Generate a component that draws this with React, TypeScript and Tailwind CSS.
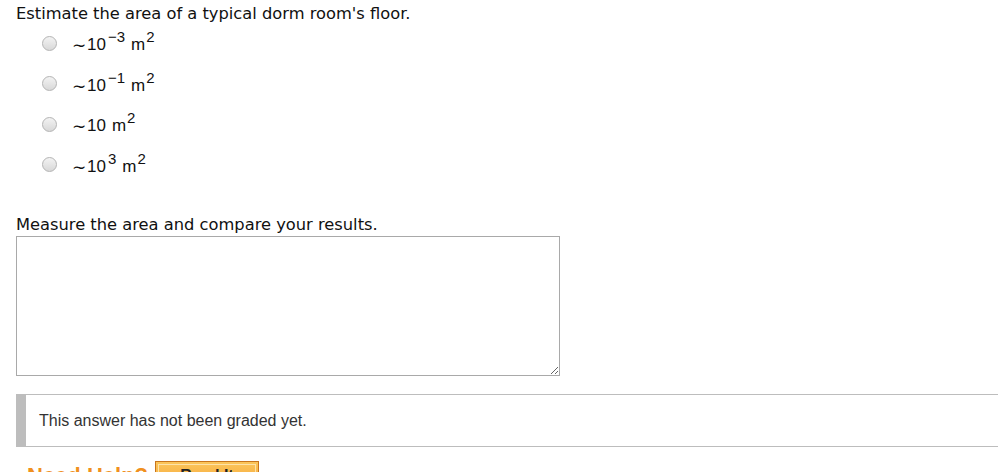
import React from "react";

const options: { base: string; exp?: string }[] = [
  { base: "10", exp: "−3" },
  { base: "10", exp: "−1" },
  { base: "10" },
  { base: "10", exp: "3" },
];

function Radio() {
  return (
    <span className="inline-block w-[15px] h-[15px] rounded-full border border-[#b4b4b4] bg-gradient-to-b from-[#f3f3f3] to-[#d8d8d8] shrink-0" />
  );
}

export default function App() {
  return (
    <div className="w-[998px] h-[472px] overflow-hidden bg-white relative">
      <div className="pl-4 pt-[4px]">
        <div
          className="text-[16.3px] leading-[20px] text-[#111]"
          style={{ fontFamily: '"DejaVu Sans", Verdana, sans-serif' }}
        >
          Estimate the area of a typical dorm room's floor.
        </div>
        <div className="flex flex-col mt-[-1px]">
          {options.map((o, i) => (
            <label key={i} className="flex items-center h-[40.5px] pl-[26px]">
              <Radio />
              <span
                className="ml-[15px] text-[17px] text-[#111] leading-none pt-[3px] whitespace-nowrap"
                style={{ fontFamily: '"Liberation Sans", Arial, sans-serif' }}
              >
                <span className="text-[17px] relative top-[1px] mr-[1px]">∼</span>
                {o.base}
                {o.exp && (
                  <sup className="text-[15px] relative top-[-8px] ml-[2px]">{o.exp}</sup>
                )}
                <span className="ml-[6px]">m</span>
                <sup className="text-[15px] relative top-[-8px] ml-[1px]">2</sup>
              </span>
            </label>
          ))}
        </div>
        <div
          className="mt-[30px] text-[16.3px] leading-[20px] text-[#111]"
          style={{ fontFamily: '"DejaVu Sans", Verdana, sans-serif' }}
        >
          Measure the area and compare your results.
        </div>
        <textarea className="block mt-[1px] w-[544px] h-[140px] border border-[#a9a9a9] resize bg-white outline-none" />
        <div className="mt-[18px] flex h-[53px] border-y border-[#bdbdbd] w-[1000px]">
          <div className="w-[10px] bg-[#bdbdbd] -my-px" />
          <div
            className="flex items-center pl-[13px] text-[16px] text-[#333]"
            style={{ fontFamily: '"Liberation Sans", Arial, sans-serif' }}
          >
            This answer has not been graded yet.
          </div>
        </div>
        <div className="flex items-start mt-[14px]">
          <div
            className="ml-[11px] w-[128px] text-[22px] font-bold text-[#f0901e] leading-none mt-[4px] whitespace-nowrap"
            style={{ fontFamily: '"Liberation Sans", Arial, sans-serif' }}
          >
            Need Help?
          </div>
          <button
            className="w-[104px] h-[30px] border border-[#c8751c] bg-gradient-to-b from-[#fbc55a] to-[#f4a134] p-[2px]"
            style={{ fontFamily: '"Liberation Sans", Arial, sans-serif' }}
          >
            <span className="flex items-center justify-center w-full h-full border border-[#fde3a8] text-[16px] font-bold text-[#222]">
              Read It
            </span>
          </button>
        </div>
      </div>
    </div>
  );
}
